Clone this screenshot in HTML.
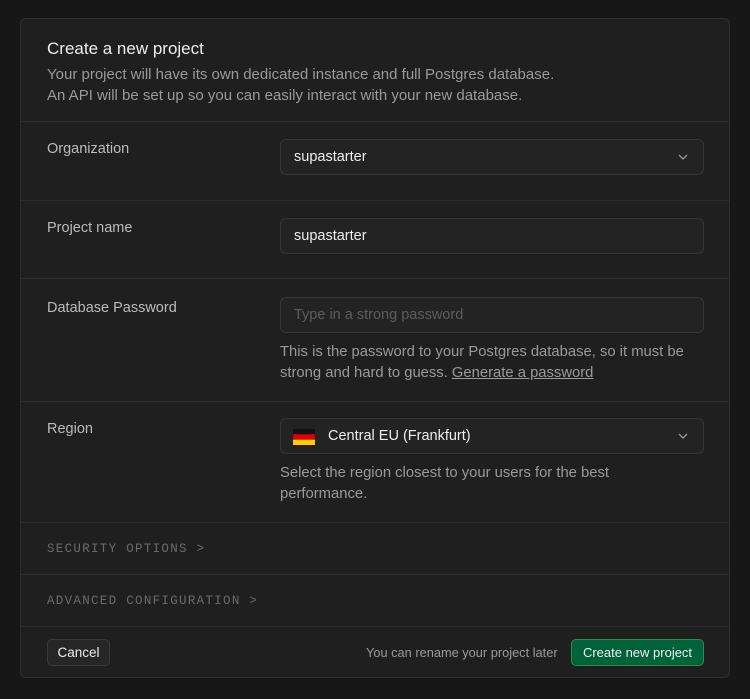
<!DOCTYPE html>
<html><head><style>
*{box-sizing:border-box;margin:0;padding:0}
body{width:750px;height:699px;background:#171717;font-family:"Liberation Sans",sans-serif;position:relative;overflow:hidden}
.card{position:absolute;left:20px;top:18px;width:710px;height:660px;background:#1f1f1f;border:1px solid #2e2e2e;border-radius:6px}
.a{position:absolute}
.line{position:absolute;left:0;right:0;height:1px;background:#2c2c2c}
.lbl{position:absolute;left:26px;color:#bbb;font-size:14.5px}
.inp{position:absolute;left:259px;width:424px;height:36px;border:1px solid #363636;border-radius:6px;background:#232323;color:#ededed;font-size:14.5px;padding:0 13px;line-height:34px}
.help{position:absolute;left:259px;color:#9a9a9a;font-size:14.8px;line-height:21px}
.mono{position:absolute;left:26px;font-family:"Liberation Mono",monospace;font-size:12.5px;letter-spacing:1.3px;color:#6b6b6b}
.chev{position:absolute;right:14px;top:12px}
</style></head><body>
<div class="card">
<div class="a" style="left:26px;top:20px;color:#ededed;font-size:17px">Create a new project</div>
<div class="a" style="left:26px;top:45px;color:#9a9a9a;font-size:15px;line-height:21px">Your project will have its own dedicated instance and full Postgres database.<br>An API will be set up so you can easily interact with your new database.</div>
<div class="line" style="top:102px"></div>
<div class="lbl" style="top:122px">Organization</div>
<div class="inp" style="top:120px">supastarter<svg class="chev" width="12" height="10" viewBox="0 0 12 10"><path d="M2 3l4 4 4-4" stroke="#999" stroke-width="1.3" fill="none"/></svg></div>
<div class="line" style="top:181px"></div>
<div class="lbl" style="top:201px">Project name</div>
<div class="inp" style="top:199px">supastarter</div>
<div class="line" style="top:259px"></div>
<div class="lbl" style="top:281px">Database Password</div>
<div class="inp" style="top:278px;color:#5d5d5d">Type in a strong password</div>
<div class="help" style="top:323px">This is the password to your Postgres database, so it must be<br>strong and hard to guess. <span style="text-decoration:underline">Generate a password</span></div>
<div class="line" style="top:382px"></div>
<div class="lbl" style="top:402px">Region</div>
<div class="inp" style="top:399px;padding-left:47px"><svg class="a" style="left:12px;top:10px" width="22" height="16"><rect width="22" height="5.3" fill="#111"/><rect y="5.3" width="22" height="5.4" fill="#d00"/><rect y="10.7" width="22" height="5.3" fill="#fc0"/></svg>Central EU (Frankfurt)<svg class="chev" width="12" height="10" viewBox="0 0 12 10"><path d="M2 3l4 4 4-4" stroke="#999" stroke-width="1.3" fill="none"/></svg></div>
<div class="help" style="top:444px">Select the region closest to your users for the best<br>performance.</div>
<div class="line" style="top:503px"></div>
<div class="mono" style="top:523px">SECURITY OPTIONS &gt;</div>
<div class="line" style="top:555px"></div>
<div class="mono" style="top:575px">ADVANCED CONFIGURATION &gt;</div>
<div class="line" style="top:607px"></div>
<div class="a" style="left:26px;top:620px;width:63px;height:27px;border:1px solid #3a3a3a;border-radius:5px;background:#262626;color:#ededed;font-size:13.5px;line-height:25px;text-align:center">Cancel</div>
<div class="a" style="left:345px;top:626px;color:#9a9a9a;font-size:12.8px">You can rename your project later</div>
<div class="a" style="left:550px;top:620px;width:133px;height:27px;border:1px solid #2f8a5a;border-radius:5px;background:#006239;color:#f0f0f0;font-size:13px;line-height:25px;text-align:center">Create new project</div>
</div>
</body></html>
